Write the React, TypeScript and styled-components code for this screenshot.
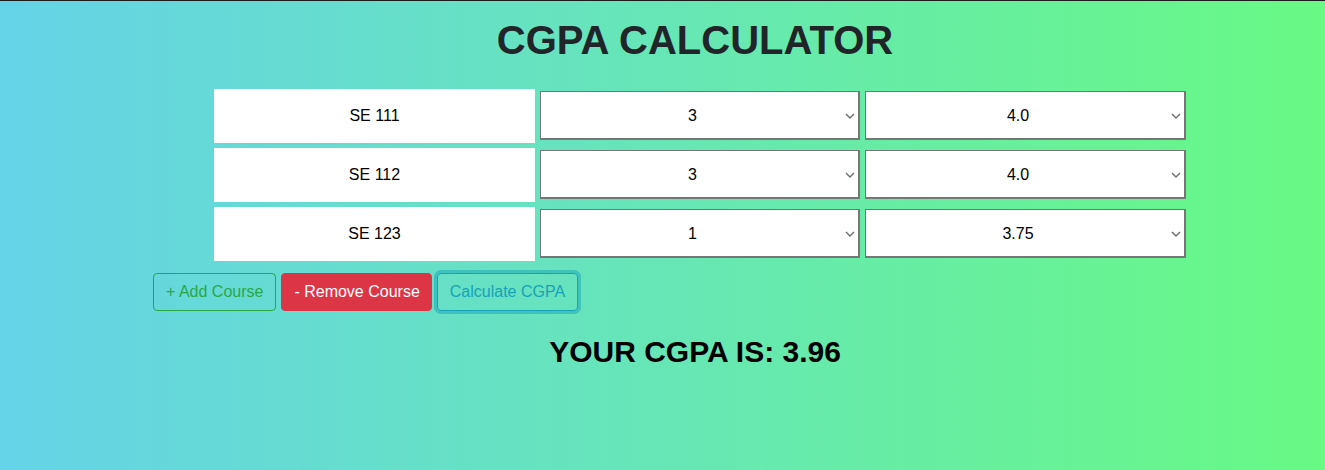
import React, { useState } from "react";
import styled, { createGlobalStyle } from "styled-components";

const Global = createGlobalStyle`
  html, body { margin: 0; padding: 0; }
  body {
    font-family: "Liberation Sans", Arial, sans-serif;
    border-top: 1px solid #1c1c1c;
    background: linear-gradient(90deg, #65d3e8 0%, #68f984 100%);
    min-height: 469px;
  }
  * { box-sizing: border-box; }
`;

const Page = styled.div`
  min-height: 469px;
  padding-top: 15px;
`;

const Main = styled.div`
  margin-left: 153px;
  width: 1084px;
  display: flex;
  flex-direction: column;
`;

const Title = styled.h1`
  margin: 0;
  font-size: 40px;
  line-height: 48px;
  font-weight: 700;
  color: #212529;
  text-align: center;
`;

const CourseGrid = styled.div`
  margin-top: 25px;
  margin-left: 61px;
  display: grid;
  grid-template-columns: 321px 320px 321px;
  column-gap: 5px;
  row-gap: 5px;
  align-items: center;
`;

const CourseInput = styled.input`
  height: 54px;
  width: 100%;
  border: none;
  background: #fff;
  font-family: "Liberation Sans", Arial, sans-serif;
  font-size: 16px;
  color: #000;
  text-align: center;
  outline: none;
`;

const SelectWrap = styled.div`
  position: relative;
  height: 49px;
  margin-top: -1px;
`;

const Select = styled.select`
  appearance: none;
  -webkit-appearance: none;
  width: 100%;
  height: 100%;
  background: #fff;
  border-style: solid;
  border-color: #767676;
  border-width: 1px 2px 2px 1px;
  border-radius: 0;
  font-family: "Liberation Sans", Arial, sans-serif;
  font-size: 16px;
  color: #000;
  text-align: center;
  text-align-last: center;
  padding: 0 16px 0 2px;
  outline: none;
`;

const Chevron = styled.svg`
  position: absolute;
  right: 5px;
  top: 50%;
  margin-top: -3px;
  pointer-events: none;
`;

const ButtonRow = styled.div`
  margin-top: 12px;
  display: flex;
  gap: 5px;
`;

const Btn = styled.button<{ $variant: "success" | "danger" | "info" }>`
  font-family: "Liberation Sans", Arial, sans-serif;
  font-size: 16px;
  line-height: 24px;
  padding: 6px 12px;
  border-radius: 4px;
  border: 1px solid;
  cursor: pointer;
  ${(p) =>
    p.$variant === "success"
      ? `color: #28a745; border-color: #28a745; background: transparent;`
      : p.$variant === "danger"
      ? `color: #fff; border-color: #dc3545; background: #dc3545; padding: 6px 11px 6px 12px;`
      : `color: #17a2b8; border-color: #17a2b8; background: transparent; box-shadow: 0 0 0 3px rgba(23,162,184,0.5);`}
`;

const Result = styled.h3`
  margin: 23px 0 0;
  font-size: 30px;
  line-height: 36px;
  font-weight: 700;
  color: #000;
  text-align: center;
`;

const credits = ["1", "2", "3", "4"];
const grades = ["4.0", "3.75", "3.5", "3.25", "3.0", "2.75", "2.5", "2.25", "2.0", "0.0"];

const Arrow = () => (
  <Chevron width="10" height="6" viewBox="0 0 10 6">
    <path d="M1 1 L5 5 L9 1" fill="none" stroke="#6d6d6d" strokeWidth="1.4" />
  </Chevron>
);

export default function App() {
  const [rows] = useState([
    { name: "SE 111", credit: "3", grade: "4.0" },
    { name: "SE 112", credit: "3", grade: "4.0" },
    { name: "SE 123", credit: "1", grade: "3.75" },
  ]);
  return (
    <>
      <Global />
      <Page>
        <Main>
          <Title>CGPA CALCULATOR</Title>
          <CourseGrid>
            {rows.map((r) => (
              <React.Fragment key={r.name}>
                <CourseInput defaultValue={r.name} />
                <SelectWrap>
                  <Select defaultValue={r.credit}>
                    {credits.map((c) => (
                      <option key={c}>{c}</option>
                    ))}
                  </Select>
                  <Arrow />
                </SelectWrap>
                <SelectWrap>
                  <Select defaultValue={r.grade}>
                    {grades.map((g) => (
                      <option key={g}>{g}</option>
                    ))}
                  </Select>
                  <Arrow />
                </SelectWrap>
              </React.Fragment>
            ))}
          </CourseGrid>
          <ButtonRow>
            <Btn $variant="success">+ Add Course</Btn>
            <Btn $variant="danger">- Remove Course</Btn>
            <Btn $variant="info">Calculate CGPA</Btn>
          </ButtonRow>
          <Result>YOUR CGPA IS: 3.96</Result>
        </Main>
      </Page>
    </>
  );
}
